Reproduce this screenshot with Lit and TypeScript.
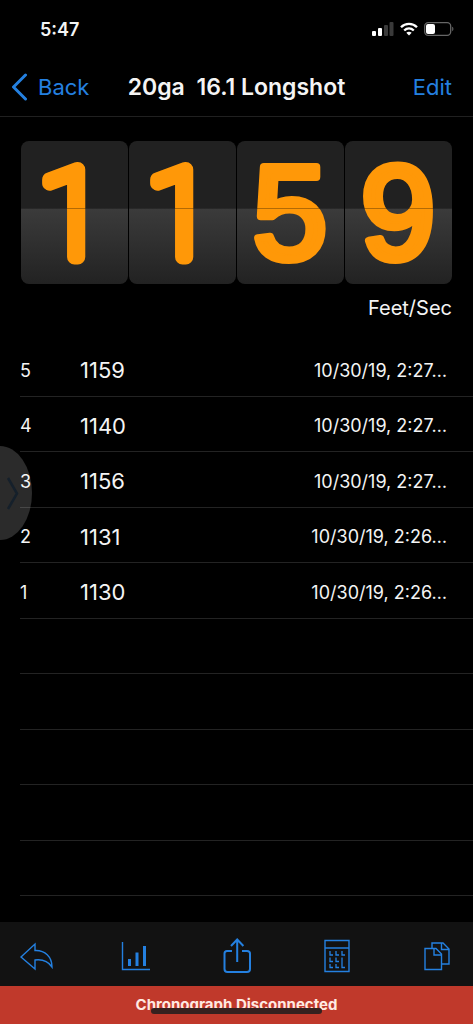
import { LitElement, html, css, svg } from "lit";
import { customElement, property } from "lit/decorators.js";
import { classMap } from "lit/directives/class-map.js";

interface Shot {
  index: number;
  speed: number;
  time: string;
}

const SHOTS: Shot[] = [
  { index: 5, speed: 1159, time: "10/30/19, 2:27…" },
  { index: 4, speed: 1140, time: "10/30/19, 2:27…" },
  { index: 3, speed: 1156, time: "10/30/19, 2:27…" },
  { index: 2, speed: 1131, time: "10/30/19, 2:26…" },
  { index: 1, speed: 1130, time: "10/30/19, 2:26…" },
];

const TABLE_ROWS = 10;

@customElement("flip-digit")
class FlipDigit extends LitElement {
  @property() value = "0";

  static styles = css`
    :host {
      display: block;
      border-radius: 8px;
      background: linear-gradient(#212121 0 47%, #3b3b3b 47%, #222 100%);
    }
    .face {
      display: block;
      width: 100%;
      height: auto;
      overflow: visible;
    }
    .digit {
      font-family: "Liberation Sans", sans-serif;
      font-size: 134px;
      fill: #ff9808;
      stroke: #ff9808;
      stroke-width: 8px;
      stroke-linejoin: round;
      stroke-linecap: round;
    }
    /* The figure one takes a face whose glyph has no foot. */
    .one {
      font-family: Roboto, sans-serif;
      font-size: 122px;
      font-weight: 100;
      stroke-width: 15px;
    }
  `;

  render() {
    const one = this.value === "1";
    return html`
      <svg class="face" viewBox="0 0 107 143" role="img" aria-label=${this.value}>
        <text class=${classMap({ digit: true, one })} x=${one ? 51 : 53} y=${one ? 116 : 118} text-anchor="middle">${this.value}</text>
        <rect x="0" y="67" width="107" height="1" fill="#000" fill-opacity="0.3" />
      </svg>
    `;
  }
}

@customElement("status-bar")
class StatusBar extends LitElement {
  static styles = css`
    :host {
      display: flex;
      align-items: center;
      justify-content: space-between;
      height: 58px;
      padding: 0 19px 0 40px;
      font-size: 18px;
      font-weight: 600;
    }
    .icons {
      display: flex;
      align-items: center;
      gap: 6px;
    }
    svg {
      display: block;
    }
  `;

  render() {
    return html`
      <span>5:47</span>
      <span class="icons">
        <svg width="22" height="14" viewBox="0 0 22 14" fill="#fff">
          <rect x="0" y="9" width="4" height="5" rx="1" />
          <rect x="6" y="6" width="4" height="8" rx="1" />
          <rect x="12" y="3" width="4" height="11" rx="1" fill="#3a3a3a" />
          <rect x="17.500" y="0" width="4" height="14" rx="1" fill="#3a3a3a" />
        </svg>
        <svg width="18" height="14" viewBox="0 0 18 14" fill="none" stroke="#fff" stroke-width="2.300">
          <path d="M1 5.200C5.400 0.700 12.600 0.700 17 5.200" />
          <path d="M4.200 8.500C7 5.800 11 5.800 13.800 8.500" />
          <path d="M6.300 10.700C7.900 9.300 10.100 9.300 11.700 10.700L9 13.600Z" fill="#fff" stroke="none" />
        </svg>
        <svg width="30" height="14" viewBox="0 0 30 14">
          <rect x="0.700" y="0.700" width="26" height="12.600" rx="3.500" fill="none" stroke="#666" stroke-width="1.300" />
          <rect x="2" y="2" width="9" height="10" rx="2" fill="#fff" />
          <path d="M28.200 4.800C29.800 5.300 29.800 8.700 28.200 9.200Z" fill="#666" />
        </svg>
      </span>
    `;
  }
}

const ICONS = [
  {
    label: "Reply",
    art: svg`<path d="M1 17L15 4V10.500C25 10 32 17 32 27C28 21 23 19 15 20V29Z" />`,
  },
  {
    label: "Chart",
    art: svg`<path d="M2.500 2V29.500H30" /><path d="M9.500 19V26M17 12.500V26M24.500 6V26" stroke-width="3" />`,
  },
  {
    label: "Share",
    art: svg`<path d="M11 11H6Q3.500 11 3.500 13.500V29Q3.500 32 6.500 32H26Q29 32 29 29V13.500Q29 11 26 11H21M16.200 22V0M10 6L16.200 -0.500L22.400 6" stroke-width="2" />`,
  },
  {
    label: "Calculator",
    art: svg`<path d="M4 0.500H28V31.500H4ZM4 8H28" /><path d="M9 11V15H12M15 11V15H18M21 11V15H24M9 17.500V21.500H12M15 17.500V21.500H18M9 24V27.500H12M15 24V27.500H18M21 17.500V27.500H24" stroke-width="1.300" />`,
  },
  {
    label: "Copy",
    art: svg`<path d="M4 8.500H15L20.500 14V29.500H4ZM13 8.500V15H20.500" /><path d="M11 8.500V3H22L28 9V24H20.500M20.500 3V9.500H28" />`,
  },
];

@customElement("tool-bar")
class ToolBar extends LitElement {
  static styles = css`
    :host {
      display: flex;
      align-items: center;
      justify-content: space-between;
      height: 64px;
      padding: 4px 20px 0;
      background: #121212;
      box-sizing: border-box;
    }
    button {
      border: 0;
      padding: 0;
      background: none;
      cursor: pointer;
    }
    svg {
      display: block;
      overflow: visible;
    }
  `;

  render() {
    return ICONS.map(
      (icon) => html`
        <button aria-label=${icon.label}>
          <svg width="32" height="32" viewBox="0 0 32 32" fill="none" stroke="#2480e0" stroke-width="1.400">
            ${icon.art}
          </svg>
        </button>
      `,
    );
  }
}

@customElement("app-root")
class AppRoot extends LitElement {
  static styles = css`
    :host {
      display: flex;
      flex-direction: column;
      position: relative;
      min-height: 100vh;
      background: #000;
      color: #f4f4f4;
      font-family: Inter, sans-serif;
    }
    .nav {
      display: grid;
      grid-template-columns: 1fr auto 1fr;
      align-items: center;
      height: 58px;
      padding: 0 11px;
      border-bottom: 1px solid #202020;
    }
    .nav button {
      display: flex;
      align-items: center;
      gap: 10px;
      border: 0;
      padding: 0;
      background: none;
      color: #2480e0;
      font: inherit;
      font-size: 22px;
      cursor: pointer;
    }
    .nav .edit {
      justify-self: end;
      padding-right: 10px;
    }
    h1 {
      margin: 0;
      font-size: 23px;
      font-weight: 600;
      white-space: pre;
    }
    .display {
      padding: 24px 21px 0;
    }
    .digits {
      display: grid;
      grid-template-columns: repeat(4, 1fr);
      gap: 1px;
    }
    .unit {
      margin: 10px 0 0;
      font-size: 20px;
      line-height: 28px;
      text-align: right;
    }
    .shots {
      flex: 1;
      display: grid;
      padding: 19px 0 26px 20px;
    }
    tbody {
      display: grid;
      grid-auto-rows: 1fr;
      height: 100%;
    }
    .shots tr {
      display: grid;
      grid-template-columns: 60px 1fr auto;
      align-items: center;
      min-height: 44px;
      padding-right: 26px;
      border-bottom: 1px solid #232323;
    }
    .shots td {
      padding: 4px 0 0;
      font-size: 18px;
    }
    .shots .speed {
      font-size: 22px;
    }
    .handle {
      position: absolute;
      left: 0;
      top: 446px;
      width: 32px;
      height: 94px;
      border: 0;
      padding: 0;
      border-radius: 0 32px 32px 0 / 0 47px 47px 0;
      background: rgba(255, 255, 255, 0.17);
      cursor: pointer;
    }
    .handle svg {
      display: block;
    }
    .banner {
      position: relative;
      height: 38px;
      background: #c0392b;
      color: #ffe9e2;
      font-size: 15px;
      font-weight: 700;
      line-height: 38px;
      text-align: center;
    }
    .home {
      position: absolute;
      left: 32%;
      right: 32%;
      bottom: 10px;
      height: 6px;
      border-radius: 3px;
      background: #35211f;
    }
  `;

  render() {
    const rows = Array.from({ length: TABLE_ROWS }, (_, i) => SHOTS[i]);
    return html`
      <status-bar></status-bar>
      <header class="nav">
        <button>
          <svg width="17" height="28" viewBox="0 0 17 28" fill="none" stroke="#2480e0" stroke-width="3" stroke-linecap="round" stroke-linejoin="round">
            <path d="M14.500 2L2.500 14L14.500 26" />
          </svg>
          Back
        </button>
        <h1>20ga  16.1 Longshot</h1>
        <button class="edit">Edit</button>
      </header>
      <section class="display">
        <div class="digits">
          ${[..."1159"].map((d) => html`<flip-digit value=${d}></flip-digit>`)}
        </div>
        <p class="unit">Feet/Sec</p>
      </section>
      <table class="shots">
        <tbody>
          ${rows.map(
            (shot) => html`
              <tr>
                <td>${shot?.index}</td>
                <td class="speed">${shot?.speed}</td>
                <td>${shot?.time}</td>
              </tr>
            `,
          )}
        </tbody>
      </table>
      <button class="handle" aria-label="Open panel">
        <svg width="32" height="94" viewBox="0 0 32 94" fill="none" stroke="#15202b" stroke-width="2.500">
          <path d="M8 32L17 47.500L8 63" />
        </svg>
      </button>
      <tool-bar></tool-bar>
      <footer class="banner">
        Chronograph Disconnected
        <span class="home"></span>
      </footer>
    `;
  }
}
